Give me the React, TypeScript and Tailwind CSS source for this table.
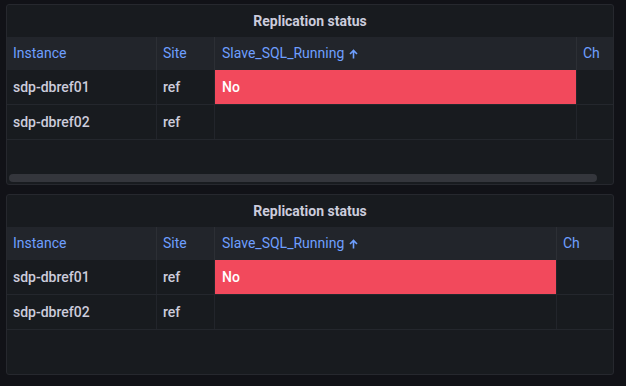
export default function App() {
  const rows = [
    { instance: 'sdp-dbref01', site: 'ref', running: 'No' },
    { instance: 'sdp-dbref02', site: 'ref', running: '' },
  ];

  const Panel = ({ colW, scroll }: { colW: number; scroll: boolean }) => (
    <div className="h-[181px] rounded-[3px] border border-[#26282e] bg-[#181b1f] flex flex-col overflow-hidden">
      <div className="h-[32px] flex items-center justify-center text-[14px] font-bold text-[#ccccdc] shrink-0">
        Replication status
      </div>
      <div className="flex-1 overflow-hidden">
        <div className="flex h-[33px] bg-[#22252b] text-[#6e9fff] text-[14px]">
          <div className="w-[150px] shrink-0 pl-[6px] flex items-center border-r border-[#2c2f35]">Instance</div>
          <div className="w-[58px] shrink-0 pl-[6px] flex items-center border-r border-[#2c2f35]">Site</div>
          <div style={{ width: colW }} className="shrink-0 pl-[7px] flex items-center gap-[5px] border-r border-[#2c2f35]">
            Slave_SQL_Running
            <svg width="9" height="10" viewBox="0 0 9 10" fill="none" stroke="#6e9fff" strokeWidth="1.6">
              <path d="M4.5 9.5V1.5M1 5l3.5-3.5L8 5" />
            </svg>
          </div>
          <div className="flex-1 pl-[6px] flex items-center">Ch</div>
        </div>
        {rows.map((r, i) => (
          <div key={i} className="flex h-[35px] border-b border-[#24272d] text-[14px] font-medium text-[#ccccdc]">
            <div className="w-[150px] shrink-0 pl-[6px] flex items-center border-r border-[#22252b]">{r.instance}</div>
            <div className="w-[58px] shrink-0 pl-[6px] flex items-center border-r border-[#22252b]">{r.site}</div>
            <div
              style={{ width: colW }}
              className={
                r.running
                  ? 'shrink-0 pl-[7px] flex items-center bg-[#f2495c] text-white border-r border-[#22252b]'
                  : 'shrink-0 pl-[7px] flex items-center border-r border-[#22252b]'
              }
            >
              {r.running}
            </div>
            <div className="flex-1" />
          </div>
        ))}
      </div>
      {scroll && (
        <div className="h-[10px] pl-[2px] pb-[2px] shrink-0">
          <div className="w-[588px] h-[8px] rounded-full bg-[#34363c]" />
        </div>
      )}
    </div>
  );

  return (
    <div
      className="w-[626px] h-[386px] bg-[#111217] pl-[6px] pr-[12px] pt-[4px] flex flex-col gap-[9px]"
      style={{ fontFamily: 'Roboto, "Liberation Sans", sans-serif' }}
    >
      <Panel colW={362} scroll />
      <Panel colW={342} scroll={false} />
    </div>
  );
}
